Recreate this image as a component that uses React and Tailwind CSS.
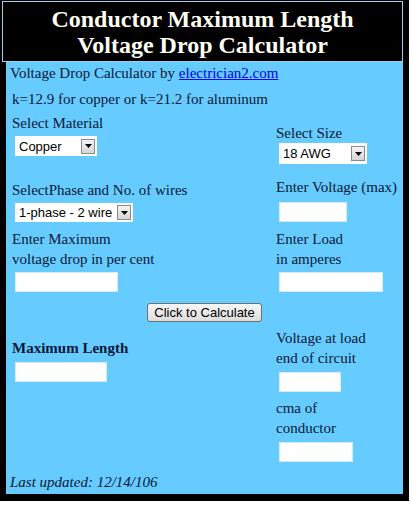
import React from "react";

const serif = { fontFamily: '"Liberation Serif", "Times New Roman", serif' };
const sans = { fontFamily: '"Liberation Sans", Arial, sans-serif' };

function FakeSelect({ value, w, h = "h-[20px]" }) {
  return (
    <div className={`${w} ${h} bg-white flex items-center justify-between pl-[4px] pr-[2px]`} style={sans}>
      <span className="text-[13px] leading-none text-black whitespace-nowrap">{value}</span>
      <span className="w-[14px] h-[15px] bg-gradient-to-b from-[#f4f4f4] to-[#d6d6d6] border border-[#8a8a8a] flex items-center justify-center">
        <svg width="7" height="4" viewBox="0 0 7 4"><path d="M0 0h7L3.5 4z" fill="#000" /></svg>
      </span>
    </div>
  );
}

function Box({ w }) {
  return <div className={`${w} h-[20px] bg-white border border-[#d8ecf7]`} />;
}

export default function App() {
  return (
    <div className="w-[412px] h-[506px] bg-white">
      <div className="w-[409px] h-[501px] bg-black pt-[1px] pl-[2px]">
        <div className="w-[401px] h-[61px] border border-[#9fd2ea] bg-black flex flex-col items-center justify-center">
          <div className="text-[24px] leading-[26px] font-bold text-[#fffff6] text-center" style={serif}>
            Conductor Maximum Length
            <br />
            Voltage Drop Calculator
          </div>
        </div>
        <div
          className="ml-[4px] w-[397px] h-[432px] bg-[#66ccff] text-[15px] leading-[20px] text-[#0b1736] flex flex-col"
          style={serif}
        >
          <div className="mt-[1px] pl-[4px]">
            Voltage Drop Calculator by{" "}
            <span className="text-[#0000ee] underline">electrician2.com</span>
          </div>
          <div className="mt-[6px] pl-[6px]">k=12.9 for copper or k=21.2 for aluminum</div>

          <div className="flex mt-[4px]">
            <div className="w-[270px] pl-[6px] flex flex-col">
              <div>Select Material</div>
              <div className="mt-[3px] ml-[3px]">
                <FakeSelect value="Copper" w="w-[82px]" />
              </div>
              <div className="mt-[24px]">SelectPhase and No. of wires</div>
              <div className="mt-[3px] ml-[3px]">
                <FakeSelect value="1-phase - 2 wire" w="w-[118px]" h="h-[19px]" />
              </div>
              <div className="mt-[7px]">Enter Maximum</div>
              <div>voltage drop in per cent</div>
              <div className="mt-[3px] ml-[3px]">
                <Box w="w-[103px]" />
              </div>
            </div>
            <div className="flex flex-col">
              <div className="mt-[10px]">Select Size</div>
              <div className="ml-[3px]">
                <FakeSelect value="18 AWG" w="w-[88px]" h="h-[21px]" />
              </div>
              <div className="mt-[13px]">Enter Voltage (max)</div>
              <div className="mt-[5px] ml-[3px]">
                <Box w="w-[68px]" />
              </div>
              <div className="mt-[7px]">Enter Load</div>
              <div>in amperes</div>
              <div className="mt-[3px] ml-[3px]">
                <Box w="w-[104px]" />
              </div>
            </div>
          </div>

          <div className="flex justify-center mt-[11px]">
            <button
              className="h-[19px] px-[6px] rounded-[3px] border border-[#707070] bg-gradient-to-b from-[#f6f6f6] to-[#dcdcdc] text-[13px] leading-none text-black"
              style={sans}
            >
              Click to Calculate
            </button>
          </div>

          <div className="flex">
            <div className="w-[270px] pl-[6px] flex flex-col">
              <div className="mt-[16px] font-bold">Maximum Length</div>
              <div className="mt-[4px] ml-[3px]">
                <Box w="w-[92px]" />
              </div>
            </div>
            <div className="flex flex-col">
              <div className="mt-[6px]">Voltage at load</div>
              <div>end of circuit</div>
              <div className="mt-[4px] ml-[3px]">
                <Box w="w-[62px]" />
              </div>
              <div className="mt-[6px]">cma of</div>
              <div>conductor</div>
              <div className="mt-[4px] ml-[3px]">
                <Box w="w-[74px]" />
              </div>
            </div>
          </div>

          <div className="mt-[10px] pl-[4px] italic">Last updated: 12/14/106</div>
        </div>
      </div>
    </div>
  );
}
